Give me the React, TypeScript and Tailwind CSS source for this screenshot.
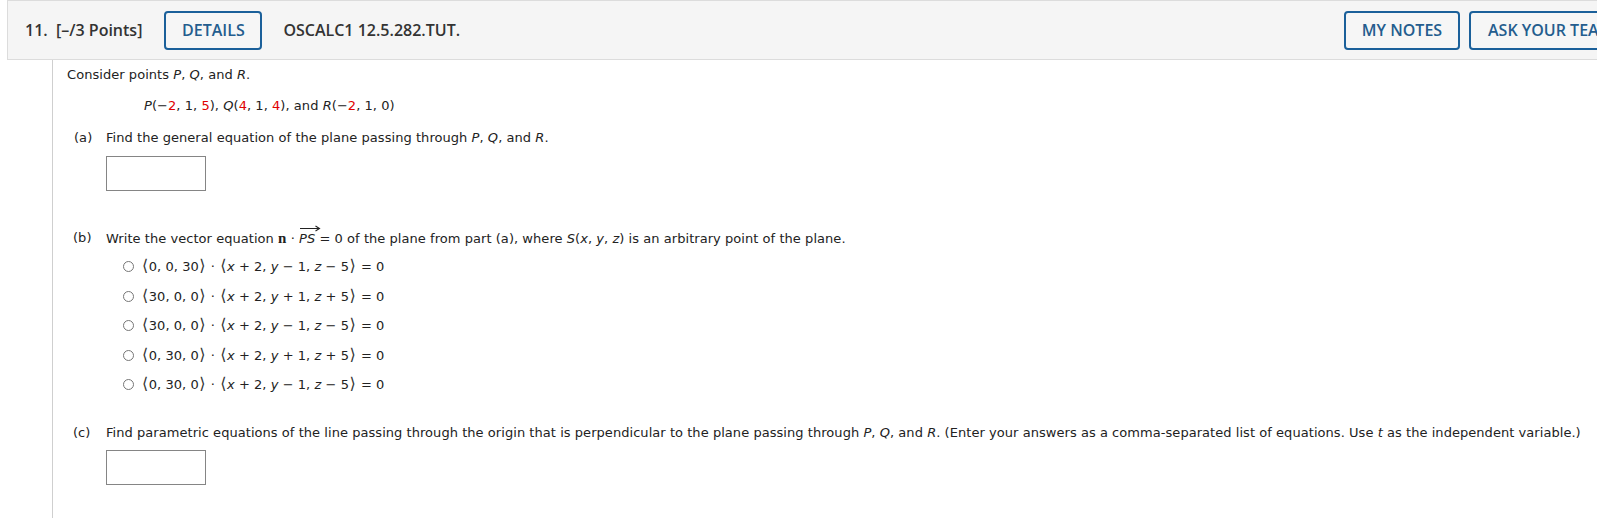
import React from "react";

const body = { fontFamily: '"DejaVu Sans", Verdana, sans-serif' };
const head = { fontFamily: '"Open Sans", "Noto Sans", sans-serif' };

function Red({ children }: { children: React.ReactNode }) {
  return <span className="text-[#e00000]">{children}</span>;
}

function V({ children }: { children: React.ReactNode }) {
  return <i>{children}</i>;
}

function Point({ name, a, b, c }: { name: string; a: React.ReactNode; b: React.ReactNode; c: React.ReactNode }) {
  return (
    <span>
      <V>{name}</V>({a}, {b}, {c})
    </span>
  );
}

// angle brackets of a vector, drawn a little taller than the text
function L() {
  return <span className="inline-block text-[16px] leading-[18px] ml-[1px] mr-[0.5px] text-[#333]">⟨</span>;
}
function R() {
  return <span className="inline-block text-[16px] leading-[18px] ml-[0.5px] mr-[1px] text-[#333]">⟩</span>;
}

function Answer({ n, sy, sz }: { n: string; sy: string; sz: string }) {
  return (
    <div className="flex items-center h-[29.5px]">
      <span className="w-[11px] h-[11px] rounded-full border border-[#767676] bg-white ml-[56px] mr-[7px]" />
      <span>
        <L />
        {n}
        <R /> · <L />
        <V>x</V> + 2, <V>y</V> {sy} 1, <V>z</V> {sz} 5<R /> = 0
      </span>
    </div>
  );
}

function Box() {
  return <div className="w-[100px] h-[35px] border border-[#858585] bg-white" />;
}

function HeadButton({ label, className = "" }: { label: string; className?: string }) {
  return (
    <div
      className={`h-[39px] flex items-center justify-center border-2 border-[#1b609a] rounded-[4px] text-[#245d8e] text-[16px] font-semibold bg-[#f6f6f6] ${className}`}
    >
      {label}
    </div>
  );
}

export default function App() {
  return (
    <div className="w-[1597px] h-[518px] bg-white overflow-hidden text-[#222]">
      {/* question header */}
      <div
        style={head}
        className="ml-[7px] w-[1720px] h-[60px] bg-[#f5f5f5] border-y border-l border-[#dcdcdc] flex items-center pl-[17px] whitespace-nowrap"
      >
        <span className="text-[16px] font-semibold text-[#333]">11.&nbsp; [–/3 Points]</span>
        <HeadButton label="DETAILS" className="w-[98px] ml-[22px]" />
        <span className="ml-[21px] text-[16px] font-semibold text-[#333]">OSCALC1 12.5.282.TUT.</span>
        <div className="flex-1" />
        <HeadButton label="MY NOTES" className="w-[116px]" />
        <HeadButton label="ASK YOUR TEACHER" className="w-[190px] ml-[9px] mr-[68px]" />
      </div>

      {/* question body */}
      <div
        style={body}
        className="ml-[52px] h-[458px] border-l border-[#cfcfcf] pl-[14px] text-[13px] leading-[18px] tracking-[0.05px] whitespace-nowrap"
      >
        <div className="pt-[6px]">
          Consider points <V>P</V>, <V>Q</V>, and <V>R</V>.
        </div>
        <div className="mt-[13px] ml-[77px]">
          <Point name="P" a={<>−<Red>2</Red></>} b="1" c={<Red>5</Red>} />,{" "}
          <Point name="Q" a={<Red>4</Red>} b="1" c={<Red>4</Red>} />, and{" "}
          <Point name="R" a={<>−<Red>2</Red></>} b="1" c="0" />
        </div>

        <div className="mt-[14px] ml-[7px] flex">
          <span className="w-[32px]">(a)</span>
          <span>
            Find the general equation of the plane passing through <V>P</V>, <V>Q</V>, and <V>R</V>.
          </span>
        </div>
        <div className="mt-[9px] ml-[39px]">
          <Box />
        </div>

        <div className="mt-[38px] ml-[6px] flex">
          <span className="w-[33px]">(b)</span>
          <span>
            Write the vector equation{" "}
            <b className="text-[15px]" style={{ fontFamily: '"Liberation Serif", serif' }}>
              n
            </b>{" "}
            ·{" "}
            <span className="relative inline-block">
              <svg className="absolute left-0 -top-[5px]" width="22" height="7" viewBox="0 0 22 7">
                <path d="M1 3.5H20M16.5 1L20.5 3.5L16.5 6" stroke="#222" strokeWidth="1.1" fill="none" />
              </svg>
              <V>PS</V>
            </span>{" "}
            = 0 of the plane from part (a), where <V>S</V>(<V>x</V>, <V>y</V>, <V>z</V>) is an arbitrary point of the
            plane.
          </span>
        </div>
        <div className="mt-[4px]">
          <Answer n="0, 0, 30" sy="−" sz="−" />
          <Answer n="30, 0, 0" sy="+" sz="+" />
          <Answer n="30, 0, 0" sy="−" sz="−" />
          <Answer n="0, 30, 0" sy="+" sz="+" />
          <Answer n="0, 30, 0" sy="−" sz="−" />
        </div>

        <div className="mt-[24px] ml-[6px] flex">
          <span className="w-[33px]">(c)</span>
          <span>
            Find parametric equations of the line passing through the origin that is perpendicular to the plane passing
            through <V>P</V>, <V>Q</V>, and <V>R</V>. (Enter your answers as a comma-separated list of equations. Use{" "}
            <V>t</V> as the independent variable.)
          </span>
        </div>
        <div className="mt-[8px] ml-[39px]">
          <Box />
        </div>
      </div>
    </div>
  );
}
